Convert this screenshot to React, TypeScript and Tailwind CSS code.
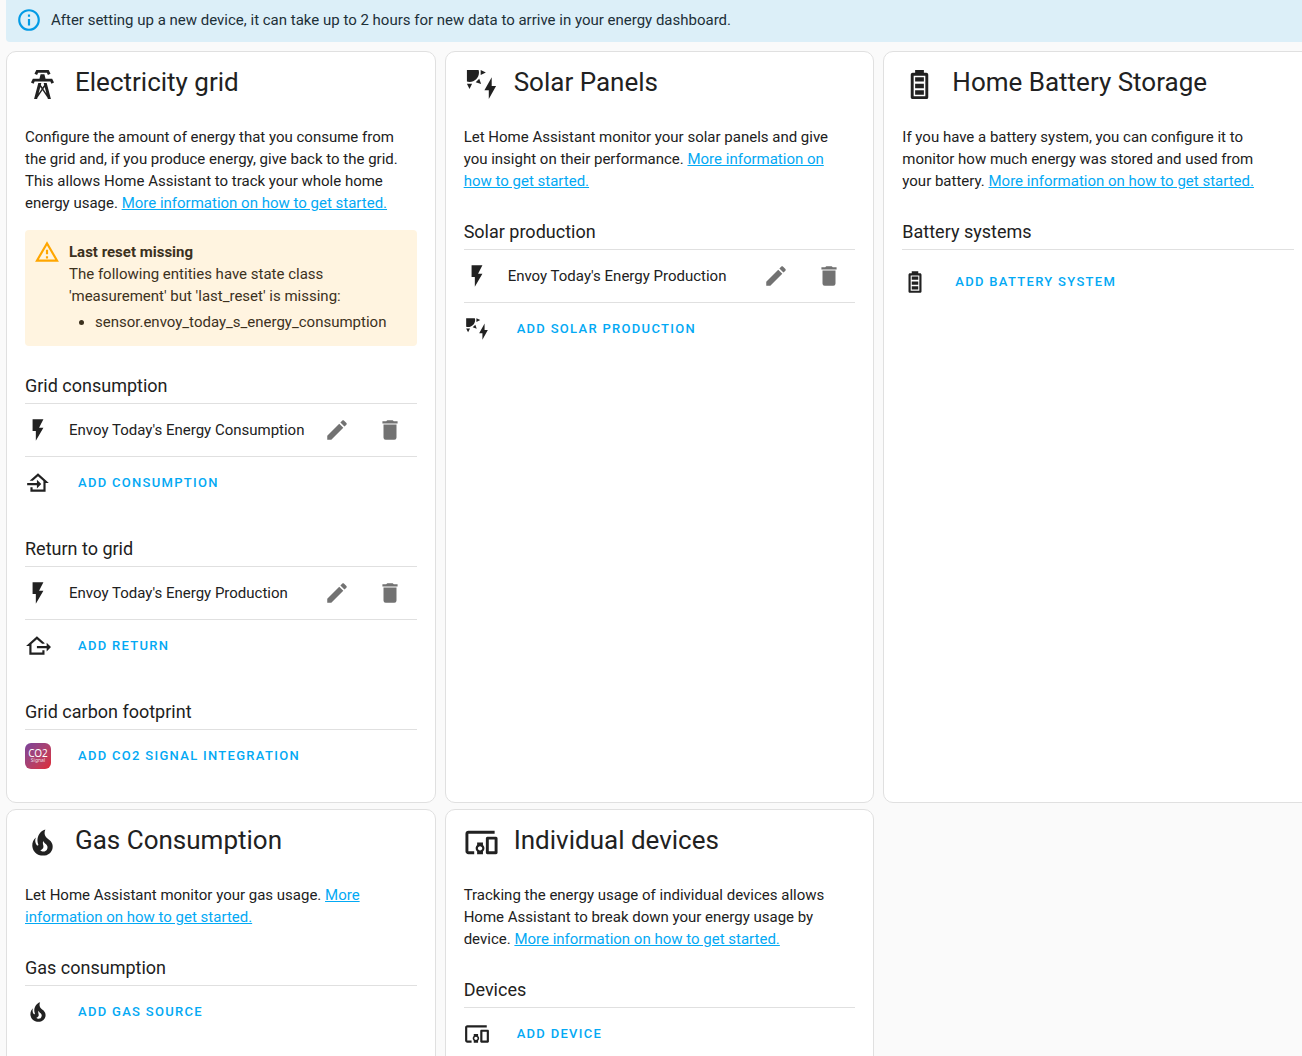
import type { ReactNode } from "react";

const paths = {
  info: "M11,9H13V7H11M12,20C7.59,20 4,16.41 4,12C4,7.59 7.59,4 12,4C16.41,4 20,7.59 20,12C20,16.41 16.41,20 12,20M12,2A10,10 0 0,0 2,12A10,10 0 0,0 12,22A10,10 0 0,0 22,12A10,10 0 0,0 12,2M11,17H13V11H11V17Z",
  alert: "M12,2L1,21H23M12,6L19.53,19H4.47M11,10V14H13V10M11,16V18H13V16",
  tower:
    "M8.28,5.45L6.5,4.55L7.76,2H16.23L17.5,4.55L15.72,5.44L15,4H9L8.28,5.45M18.62,8H14.09L13.3,5H10.7L9.91,8H5.38L4.1,10.55L5.89,11.44L6.62,10H17.38L18.1,11.45L19.89,10.56L18.62,8M17.77,22H15.7L15.46,21.1L12,15.9L8.53,21.1L8.3,22H6.23L9.12,11H11.19L10.83,12.35L12,14.1L13.16,12.35L12.81,11H14.88L17.77,22M11.4,15L10.5,13.65L9.32,18.13L11.4,15M14.68,18.12L13.5,13.64L12.6,15L14.68,18.12Z",
  solar:
    "M11.45,2V5.55L15,3.77L11.45,2M10.45,8L8,10.46L11.75,11.71L10.45,8M2,11.45L3.77,15L5.55,11.45H2M10,2H2V10C2.57,10.17 3.17,10.25 3.77,10.25C7.35,10.26 10.26,7.35 10.27,3.75C10.26,3.16 10.17,2.57 10,2M17,22V16H14L19,7V13H22L17,22Z",
  battery:
    "M16,20H8V6H16M16.67,4H15V2H9V4H7.33C6.6,4 6,4.6 6,5.33V20.67C6,21.4 6.6,22 7.33,22H16.67C17.41,22 18,21.41 18,20.67V5.33C18,4.6 17.4,4 16.67,4M15,16H9V19H15V16M15,7H9V10H15V7M15,11.5H9V14.5H15V11.5Z",
  fire: "M17.66 11.2C17.43 10.9 17.15 10.64 16.89 10.38C16.22 9.78 15.46 9.35 14.82 8.72C13.33 7.26 13 4.85 13.95 3C13 3.23 12.17 3.75 11.46 4.32C8.87 6.4 7.85 10.07 9.07 13.22C9.11 13.32 9.15 13.42 9.15 13.55C9.15 13.77 9 13.97 8.8 14.05C8.57 14.15 8.33 14.09 8.14 13.93C8.08 13.88 8.04 13.83 8 13.76C6.87 12.33 6.69 10.28 7.45 8.64C5.78 10 4.87 12.3 5 14.47C5.06 14.97 5.12 15.47 5.29 15.97C5.43 16.57 5.7 17.17 6 17.7C7.08 19.43 8.95 20.67 10.96 20.92C13.1 21.19 15.39 20.8 17.03 19.32C18.86 17.66 19.5 15 18.56 12.72L18.43 12.46C18.22 12 17.66 11.2 17.66 11.2M14.5 17.5C14.22 17.74 13.76 18 13.4 18.1C12.28 18.5 11.16 17.94 10.5 17.28C11.69 17 12.4 16.12 12.61 15.23C12.78 14.43 12.46 13.77 12.33 13C12.21 12.26 12.23 11.63 12.5 10.94C12.69 11.32 12.89 11.7 13.13 12C13.9 13 15.11 13.44 15.37 14.8C15.41 14.94 15.43 15.08 15.43 15.23C15.46 16.05 15.1 16.95 14.5 17.5H14.5Z",
  devices:
    "M3 6H21V4H3C1.9 4 1 4.9 1 6V18C1 19.1 1.9 20 3 20H7V18H3V6M13 12H9V13.78C8.39 14.33 8 15.11 8 16C8 16.89 8.39 17.67 9 18.22V20H13V18.22C13.61 17.67 14 16.88 14 16S13.61 14.33 13 13.78V12M11 17.5C10.17 17.5 9.5 16.83 9.5 16S10.17 14.5 11 14.5 12.5 15.17 12.5 16 11.83 17.5 11 17.5M22 8H16C15.5 8 15 8.5 15 9V19C15 19.5 15.5 20 16 20H22C22.5 20 23 19.5 23 19V9C23 8.5 22.5 8 22 8M21 18H17V10H21V18Z",
  flash: "M7,2V13H10V22L17,10H13L17,2H7Z",
  pencil:
    "M20.71,7.04C21.1,6.65 21.1,6 20.71,5.63L18.37,3.29C18,2.9 17.35,2.9 16.96,3.29L15.12,5.12L18.87,8.87M3,17.25V21H6.75L17.81,9.93L14.06,6.18L3,17.25Z",
  trash:
    "M19,4H15.5L14.5,3H9.5L8.5,4H5V6H19M6,19A2,2 0 0,0 8,21H16A2,2 0 0,0 18,19V7H6V19Z",
  homeImport:
    "M15,13L11,17V14H2V12H11V9L15,13M5,20V16H7V18H17V10.19L12,5.69L7.21,10H4.22L12,3L22,12H19V20H5Z",
  homeExport:
    "M24,13L20,17V14H11V12H20V9L24,13M4,20V12H1L11,3L18,9.3V10H15.79L11,5.69L6,10.19V18H16V16H18V20H4Z",
};

type IconName = keyof typeof paths;

function Icon({ name, large = false }: { name: IconName; large?: boolean }) {
  return (
    <svg
      viewBox="0 0 24 24"
      fill="currentColor"
      aria-hidden="true"
      className={large ? "size-[35px] shrink-0" : "size-[26px] shrink-0"}
    >
      <path d={paths[name]} />
    </svg>
  );
}

function Co2Logo() {
  return (
    <span
      aria-hidden="true"
      className="flex size-[26px] shrink-0 flex-col items-center justify-center rounded-md bg-linear-to-br from-[#7a419b] to-[#e0232e] font-['Noto_Sans',sans-serif] text-white"
    >
      <span className="text-[10px] leading-[9px]">CO2</span>
      <span className="text-[5px] leading-[5px] opacity-80">Signal</span>
    </span>
  );
}

interface CardProps {
  icon: IconName;
  title: string;
  description: string;
  children: ReactNode;
}

function Card({ icon, title, description, children }: CardProps) {
  return (
    <section className="rounded-[10px] border border-[#e0e0e0] bg-white px-[18px] pt-[15px] pb-5">
      <header className="flex items-start gap-[15px]">
        <Icon name={icon} large />
        <h1 className="text-[26px] leading-[30px]">{title}</h1>
      </header>
      <p className="mt-6 pr-3">
        {description}{" "}
        <a href="#" className="text-[#03a9f4] underline">
          More information on how to get started.
        </a>
      </p>
      {children}
    </section>
  );
}

function Section({ title, children }: { title: string; children: ReactNode }) {
  return (
    <div>
      <h2 className="border-b border-[#e0e0e0] pt-[29px] pb-1.5 text-lg leading-[22px]">
        {title}
      </h2>
      {children}
    </div>
  );
}

function SourceRow({ name }: { name: string }) {
  return (
    <div className="flex items-center border-b border-[#e0e0e0]">
      <Icon name="flash" />
      <span className="ml-[18px] min-w-0 flex-1 whitespace-nowrap">{name}</span>
      <button
        aria-label={`Edit ${name}`}
        className="flex h-[52px] w-[53px] items-center justify-center text-[#727272]"
      >
        <Icon name="pencil" />
      </button>
      <button
        aria-label={`Delete ${name}`}
        className="flex h-[52px] w-[53px] items-center justify-center text-[#727272]"
      >
        <Icon name="trash" />
      </button>
    </div>
  );
}

interface AddRowProps {
  icon: ReactNode;
  label: string;
  tall?: boolean;
}

function AddRow({ icon, label, tall = false }: AddRowProps) {
  return (
    <div
      className={
        tall
          ? "flex h-16 items-center gap-[18px]"
          : "flex h-[52px] items-center gap-[18px]"
      }
    >
      {icon}
      <button className="h-10 px-[9px] text-[13px] font-medium tracking-widest text-[#03a9f4] uppercase">
        {label}
      </button>
    </div>
  );
}

export default function App() {
  return (
    <main className="min-h-screen overflow-x-hidden bg-[#fafafa] pl-1.5 font-[Roboto,sans-serif] text-[15px] leading-[22px] text-[#212121]">
      <div className="flex items-center gap-[9px] rounded-bl bg-[#dceff8] px-2.5 pt-[7px] pb-[9px] text-[#1d3038]">
        <span className="text-[#039be5]">
          <Icon name="info" />
        </span>
        <p>
          After setting up a new device, it can take up to 2 hours for new data
          to arrive in your energy dashboard.
        </p>
      </div>

      {/* the grid bleeds past the right edge of the viewport */}
      <div className="mt-[9px] -mr-[11px] grid grid-cols-3 gap-x-[9px] gap-y-1.5">
        <Card
          icon="tower"
          title="Electricity grid"
          description="Configure the amount of energy that you consume from the grid and, if you produce energy, give back to the grid. This allows Home Assistant to track your whole home energy usage."
        >
          <div
            role="alert"
            className="mt-4 flex gap-[9px] rounded bg-[#fff4e0] px-[9px] pt-[9px] pb-[13px] text-[#3c311d]"
          >
            <span className="text-[#ffa600]">
              <Icon name="alert" />
            </span>
            <div className="pt-0.5">
              <strong className="block font-bold">Last reset missing</strong>
              <p>
                The following entities have state class 'measurement' but
                'last_reset' is missing:
              </p>
              <ul className="mt-1 list-disc pl-[26px]">
                <li>sensor.envoy_today_s_energy_consumption</li>
              </ul>
            </div>
          </div>
          <Section title="Grid consumption">
            <SourceRow name="Envoy Today's Energy Consumption" />
            <AddRow icon={<Icon name="homeImport" />} label="Add consumption" />
          </Section>
          <Section title="Return to grid">
            <SourceRow name="Envoy Today's Energy Production" />
            <AddRow icon={<Icon name="homeExport" />} label="Add return" />
          </Section>
          <Section title="Grid carbon footprint">
            <AddRow icon={<Co2Logo />} label="Add CO2 signal integration" />
          </Section>
        </Card>

        <Card
          icon="solar"
          title="Solar Panels"
          description="Let Home Assistant monitor your solar panels and give you insight on their performance."
        >
          <Section title="Solar production">
            <SourceRow name="Envoy Today's Energy Production" />
            <AddRow icon={<Icon name="solar" />} label="Add solar production" />
          </Section>
        </Card>

        <Card
          icon="battery"
          title="Home Battery Storage"
          description="If you have a battery system, you can configure it to monitor how much energy was stored and used from your battery."
        >
          <Section title="Battery systems">
            <AddRow icon={<Icon name="battery" />} label="Add battery system" tall />
          </Section>
        </Card>

        <Card
          icon="fire"
          title="Gas Consumption"
          description="Let Home Assistant monitor your gas usage."
        >
          <Section title="Gas consumption">
            <AddRow icon={<Icon name="fire" />} label="Add gas source" />
          </Section>
        </Card>

        <Card
          icon="devices"
          title="Individual devices"
          description="Tracking the energy usage of individual devices allows Home Assistant to break down your energy usage by device."
        >
          <Section title="Devices">
            <AddRow icon={<Icon name="devices" />} label="Add device" />
          </Section>
        </Card>
      </div>
    </main>
  );
}
